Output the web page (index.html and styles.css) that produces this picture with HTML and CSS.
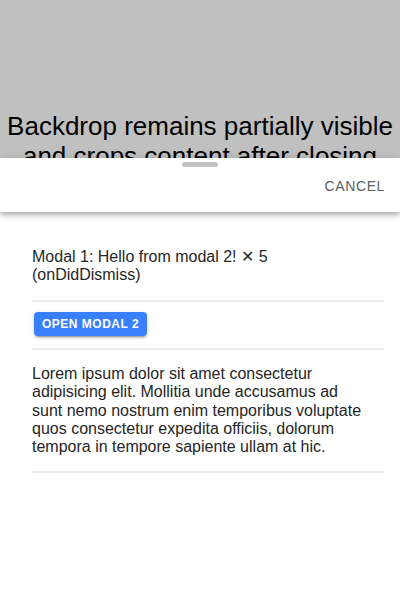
FILE: index.html
```html
<!DOCTYPE html>
<html lang="en">
<head>
<meta charset="utf-8">
<title>Modal</title>
<link rel="stylesheet" href="styles.css">
</head>
<body>
<div class="page">
  <div class="backdrop">
    <h1 class="title">Backdrop remains partially visible and crops content after closing</h1>
  </div>
  <div class="sheet">
    <header class="header">
      <div class="handle"></div>
      <div class="toolbar">
        <button class="cancel" type="button">Cancel</button>
      </div>
    </header>
    <main class="content">
      <div class="item item-first">
        <div class="item-inner">
          <p class="label">Modal 1: Hello from modal 2! ✕ 5 (onDidDismiss)</p>
        </div>
      </div>
      <div class="item item-button">
        <div class="item-inner">
          <button class="btn" type="button">Open Modal 2</button>
        </div>
      </div>
      <div class="item item-text">
        <div class="item-inner">
          <p class="label">Lorem ipsum dolor sit amet consectetur adipisicing elit. Mollitia unde accusamus ad sunt nemo nostrum enim temporibus voluptate quos consectetur expedita officiis, dolorum tempora in tempore sapiente ullam at hic.</p>
        </div>
      </div>
    </main>
  </div>
</div>
</body>
</html>
```

FILE: styles.css
```css
html, body {
  margin: 0;
  padding: 0;
  height: 100%;
}
body {
  font-family: "Liberation Sans", Arial, sans-serif;
  background: #ffffff;
}
.page {
  display: flex;
  flex-direction: column;
  height: 600px;
  overflow: hidden;
}
.backdrop {
  height: 158px;
  flex: 0 0 158px;
  background: #c0c0c0;
  overflow: hidden;
  padding-top: 111px;
  box-sizing: border-box;
}
.title {
  margin: 0;
  font-weight: normal;
  font-size: 26px;
  line-height: 30px;
  color: #000;
  text-align: center;
  padding: 0 2px;
}
.sheet {
  flex: 1;
  background: #fff;
  display: flex;
  flex-direction: column;
}
.header {
  position: relative;
  z-index: 2;
  height: 54px;
  background: #fff;
  box-shadow: 0 2px 4px -1px rgba(0,0,0,0.2), 0 4px 5px 0 rgba(0,0,0,0.14), 0 1px 10px 0 rgba(0,0,0,0.12);
  display: flex;
  flex-direction: column;
}
.handle {
  width: 36px;
  height: 5px;
  border-radius: 3px;
  background: #c4c4c4;
  margin: 4px auto 0;
}
.toolbar {
  flex: 1;
  display: flex;
  justify-content: flex-end;
  align-items: center;
  padding: 0 15px 7px 0;
}
.cancel {
  border: 0;
  background: none;
  padding: 0;
  margin: 0;
  font-family: "Liberation Sans", Arial, sans-serif;
  font-size: 14px;
  letter-spacing: 0.6px;
  text-transform: uppercase;
  color: #5f5f5f;
}
.content {
  padding: 16px 16px 0;
}
.item {
  padding-left: 16px;
}
.item-inner {
  border-bottom: 2px solid #ebebeb;
  padding-right: 16px;
}
.label {
  margin: 0;
  font-family: "Liberation Sans", "DejaVu Sans", sans-serif;
  font-size: 16px;
  line-height: 18.4px;
  color: #262626;
}
.item-first .item-inner {
  padding-top: 20px;
  padding-bottom: 15px;
}
.item-button .item-inner {
  padding-top: 10px;
  padding-bottom: 12px;
  display: flex;
}
.btn {
  margin-left: 2px;
  height: 24px;
  padding: 0 8px;
  border: 0;
  border-radius: 4px;
  background: #3880ff;
  color: #fff;
  font-family: "Liberation Sans", Arial, sans-serif;
  font-weight: bold;
  font-size: 12px;
  letter-spacing: 0.5px;
  text-transform: uppercase;
  box-shadow: 0 3px 1px -2px rgba(0,0,0,0.2), 0 2px 2px 0 rgba(0,0,0,0.14), 0 1px 5px 0 rgba(0,0,0,0.12);
}
.item-text .item-inner {
  padding-top: 15px;
  padding-bottom: 14px;
}
```
